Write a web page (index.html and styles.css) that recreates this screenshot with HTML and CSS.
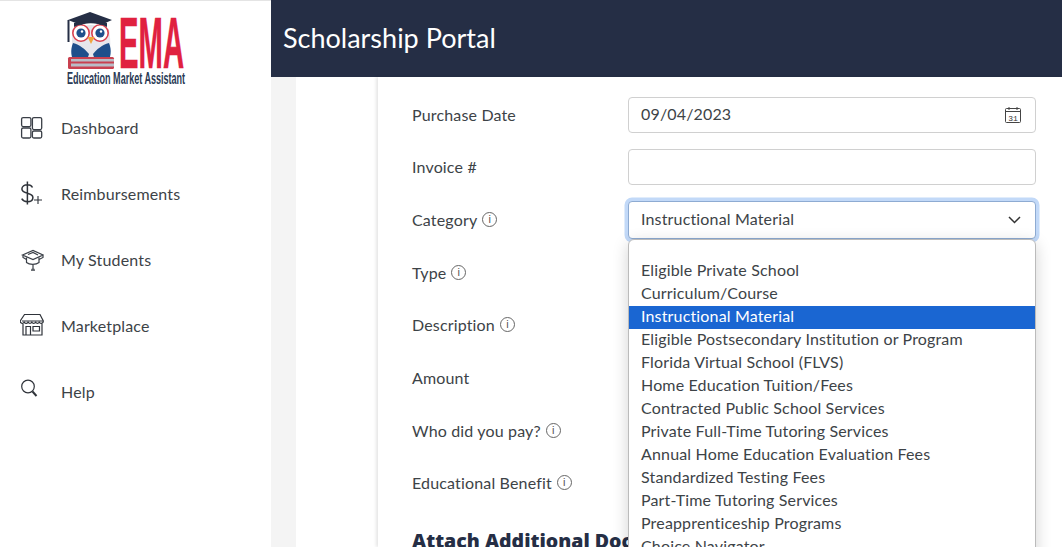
FILE: index.html
```html
<!DOCTYPE html>
<html lang="en">
<head>
<meta charset="utf-8">
<title>Scholarship Portal</title>
<link rel="stylesheet" href="styles.css">
</head>
<body>
<div class="app">
  <aside class="sidebar">
    <div class="logo">
      <svg width="135" height="85" viewBox="0 0 135 85">
        <path d="M13 24c0 0 8-4 18-4s18 4 18 4c2 12 2 25-2 34H16c-4-9-5-22-3-34z" fill="#e6e6ec"/>
        <path d="M13 38c-3 7-2 15 2 20h6c5-1 7-5 8-9-4-5-9-9-16-11zM49 38c3 7 2 15-2 20h-6c-5-1-7-5-8-9 4-5 9-9 16-11z" fill="#1f4f8b"/>
        <circle cx="21" cy="28" r="8.200" fill="#fff" stroke="#d9404f" stroke-width="1.600"/>
        <circle cx="40" cy="28" r="8.200" fill="#fff" stroke="#d9404f" stroke-width="1.600"/>
        <circle cx="21" cy="28" r="4.600" fill="#1f4f8b"/>
        <circle cx="40" cy="28" r="4.600" fill="#1f4f8b"/>
        <circle cx="22" cy="26.500" r="1.200" fill="#fff"/>
        <circle cx="41" cy="26.500" r="1.200" fill="#fff"/>
        <path d="M27.500 32h7l-3.500 7z" fill="#f0a63c"/>
        <path d="M8 15 30 7l22 8-11 5c-6-3-14-3-20 0z" fill="#252e45"/>
        <path d="M14 18v4c10-5 24-5 33 0v-4l-16-2z" fill="#252e45"/>
        <path d="M8.500 15v22" stroke="#252e45" stroke-width="2"/>
        <rect x="8" y="52" width="46" height="12" rx="1.500" fill="#c9404f"/>
        <path d="M11 54h43v2.500H11zM11 58.500h43V61.500H11z" fill="#b9bdc7"/>
        <text class="logo-ema" x="59" y="63" textLength="65" lengthAdjust="spacingAndGlyphs">EMA</text>
        <text class="logo-sub" x="7" y="79" textLength="118" lengthAdjust="spacingAndGlyphs">Education Market Assistant</text>
      </svg>
    </div>
    <nav class="nav">
      <a class="nav-item">
        <span class="nav-icon">
          <svg width="24" height="24" viewBox="0 0 24 24" fill="none" stroke="#3a3f47" stroke-width="1.300">
            <rect x="1.600" y="2.600" width="9.300" height="9" rx="1.500"/>
            <rect x="1.600" y="13" width="9.300" height="10" rx="1.500"/>
            <rect x="12.400" y="2.600" width="9.300" height="12" rx="1.500"/>
            <rect x="12.400" y="16" width="9.300" height="7" rx="1.500"/>
          </svg>
        </span>
        <span>Dashboard</span>
      </a>
      <a class="nav-item">
        <span class="nav-icon">
          <svg width="24" height="24" viewBox="0 0 24 24" fill="none" stroke="#2f333a" stroke-width="1.500">
            <path d="M12.500 6.500c-1-2-2.900-2.800-5-2.800-3 0-5.600 1.600-5.600 4.300 0 5.600 11 3 11 8.400 0 2.800-2.600 4.300-5.600 4.300-2.500 0-4.500-1-5.600-3M7.400 .5v23"/>
            <path d="M14 19h8M18 15v8" stroke-width="1.100"/>
          </svg>
        </span>
        <span>Reimbursements</span>
      </a>
      <a class="nav-item">
        <span class="nav-icon">
          <svg width="24" height="24" viewBox="0 0 24 24" fill="none" stroke="#3a3f47" stroke-width="1.200">
            <path d="M2.500 8 13 3.500 23 8l-10 4.500z"/>
            <path d="M6.500 10.500v5c3 2.500 9.500 2.500 12.500 0v-5M8 7.500l5-2 5 2.500"/>
            <path d="M3 8.500v2l3.500 2M23 8.500v2l-4 2M13 18v3.500"/>
            <circle cx="13" cy="23" r="1.200"/>
          </svg>
        </span>
        <span>My Students</span>
      </a>
      <a class="nav-item">
        <span class="nav-icon">
          <svg width="24" height="24" viewBox="0 0 24 24" fill="none" stroke="#2f333a" stroke-width="1.200">
            <path d="M4.500 1.500h15.500l3.300 6.500c0 3-4 3-4 .5 0 2.500-3.600 2.500-3.700 0 0 2.500-3.800 2.500-3.800 0 0 2.500-3.700 2.500-3.700 0 0 2.500-3.900 2.500-3.900 0 0 2.500-4 2.500-4-.5z"/>
            <path d="M2 8h21M3 11v11h19V11"/>
            <path d="M6 22v-8.500h4.500V22M13 13.500h6.500V18H13z"/>
          </svg>
        </span>
        <span>Marketplace</span>
      </a>
      <a class="nav-item">
        <span class="nav-icon">
          <svg width="24" height="24" viewBox="0 0 24 24" fill="none" stroke="#2f333a" stroke-width="1.200">
            <circle cx="8" cy="7.500" r="6.300"/>
            <path d="m12.500 12.500 4 4.500" stroke-width="2"/>
          </svg>
        </span>
        <span>Help</span>
      </a>
    </nav>
  </aside>

  <div class="main">
    <header class="topbar">Scholarship Portal</header>
    <div class="content">
      <div class="gutter"></div>
      <div class="blank"></div>
      <section class="card">
        <div class="row">
          <label class="label">Purchase Date</label>
          <div class="control">
            <span>09/04/2023</span>
            <svg class="cal" width="18" height="18" viewBox="0 0 18 18" fill="none" stroke="#444" stroke-width="1">
              <rect x="1.500" y="2.500" width="15" height="14" rx="1"/>
              <path d="M1.500 5.500h15M5 1v3M13 1v3"/>
              <text class="cal-num" x="9" y="14.500" text-anchor="middle">31</text>
            </svg>
          </div>
        </div>
        <div class="row">
          <label class="label">Invoice #</label>
          <div class="control"></div>
        </div>
        <div class="row">
          <label class="label">Category <i class="info">i</i></label>
          <div class="control focused">
            <span>Instructional Material</span>
            <svg class="chev" width="13" height="8" viewBox="0 0 13 8" fill="none" stroke="#333" stroke-width="1.500"><path d="m1 1 5.500 5.500 5.500-5.500"/></svg>
            <ul class="menu">
              <li></li>
              <li>Eligible Private School</li>
              <li>Curriculum/Course</li>
              <li class="selected">Instructional Material</li>
              <li>Eligible Postsecondary Institution or Program</li>
              <li>Florida Virtual School (FLVS)</li>
              <li>Home Education Tuition/Fees</li>
              <li>Contracted Public School Services</li>
              <li>Private Full-Time Tutoring Services</li>
              <li>Annual Home Education Evaluation Fees</li>
              <li>Standardized Testing Fees</li>
              <li>Part-Time Tutoring Services</li>
              <li>Preapprenticeship Programs</li>
              <li>Choice Navigator</li>
            </ul>
          </div>
        </div>
        <div class="row">
          <label class="label">Type <i class="info">i</i></label>
          <div class="control"></div>
        </div>
        <div class="row">
          <label class="label">Description <i class="info">i</i></label>
          <div class="control"></div>
        </div>
        <div class="row">
          <label class="label">Amount</label>
          <div class="control"></div>
        </div>
        <div class="row">
          <label class="label">Who did you pay? <i class="info">i</i></label>
          <div class="control"></div>
        </div>
        <div class="row">
          <label class="label">Educational Benefit <i class="info">i</i></label>
          <div class="control"></div>
        </div>
        <h2 class="heading">Attach Additional Documents</h2>
      </section>
    </div>
  </div>
</div>
</body>
</html>
```

FILE: styles.css
```css
* { box-sizing: border-box; }
html, body { margin: 0; height: 100%; overflow: hidden; }
body { font-family: Lato, "Open Sans", sans-serif; color: #3d4347; background: #fff; letter-spacing: .16px; }

.app { display: flex; height: 547px; overflow: hidden; }

.sidebar { width: 271px; flex: none; background: #fff; border-top: 1px solid #e4e4e4; }
.logo { padding: 4px 0 0 60px; height: 93px; }
.logo svg { display: block; }
.logo-ema { font: 700 73px "Liberation Sans", sans-serif; fill: #e0213f; stroke: #e0213f; stroke-width: .6; letter-spacing: 0; }
.logo-sub { font: 700 17px "Liberation Sans", sans-serif; fill: #2a3a55; letter-spacing: 0; }

.nav { display: flex; flex-direction: column; }
.nav-item { display: flex; align-items: center; height: 66px; padding-left: 20px; font-size: 16px; color: #3d4347; }
.nav-icon { width: 41px; flex: none; display: flex; }

.main { flex: 1; min-width: 0; display: flex; flex-direction: column; }
.topbar { height: 77px; flex: none; display: flex; align-items: center; padding: 0 0 2px 12px; background: #252e45; color: #fff; font-size: 27px; letter-spacing: 0; }

.content { flex: 1; display: flex; min-height: 0; }
.gutter { width: 25px; flex: none; background: #f4f4f4; }
.blank { width: 82px; flex: none; background: #fff; }
.card { flex: 1; padding: 19.6px 26px 0 34px; background: #fff; box-shadow: -2px 0 3px rgba(0, 0, 0, .1); }

.row { display: flex; align-items: center; height: 36px; margin-bottom: 16.7px; }
.label { width: 216px; flex: none; padding-bottom: 1px; font-size: 16px; display: flex; align-items: center; gap: 5px; }
.info { flex: none; width: 15px; height: 15px; border: 1.2px solid #666; border-radius: 50%; font: normal 11px/12.600px "Liberation Sans", sans-serif; text-align: center; color: #555; }

.control { position: relative; flex: 1; height: 36px; display: flex; align-items: center; justify-content: space-between; padding: 0 12px 3px; border: 1px solid #d0d0d0; border-radius: 4px; background: #fff; font-size: 16px; }
.control.focused { height: 38px; border-color: #8eabd2; box-shadow: 0 0 0 3.500px #c2d9f8; z-index: 2; }
.cal { margin-right: 1px; margin-top: 3px; }
.cal-num { font: 8px "Liberation Mono", monospace; fill: #333; stroke: none; letter-spacing: 0; }
.chev { margin: 3px 2px 0 0; }

.menu { position: absolute; top: 37px; left: -1px; right: -1px; margin: 0; padding: 0; height: 340px; list-style: none; background: #fff; border: 1px solid #bbb; border-radius: 6px; box-shadow: 0 4px 16px rgba(0, 0, 0, .18); overflow: hidden; }
.menu li { height: 23px; line-height: 19px; padding-left: 12px; font-size: 16px; white-space: nowrap; }
.menu li:first-child { height: 20px; }
.menu li.selected { background: #1a66d2; color: #fff; }

.heading { margin: 0; padding-top: 9px; font-family: "Open Sans", sans-serif; font-size: 19.500px; font-weight: 800; letter-spacing: 0; color: #252e45; white-space: nowrap; }
```
